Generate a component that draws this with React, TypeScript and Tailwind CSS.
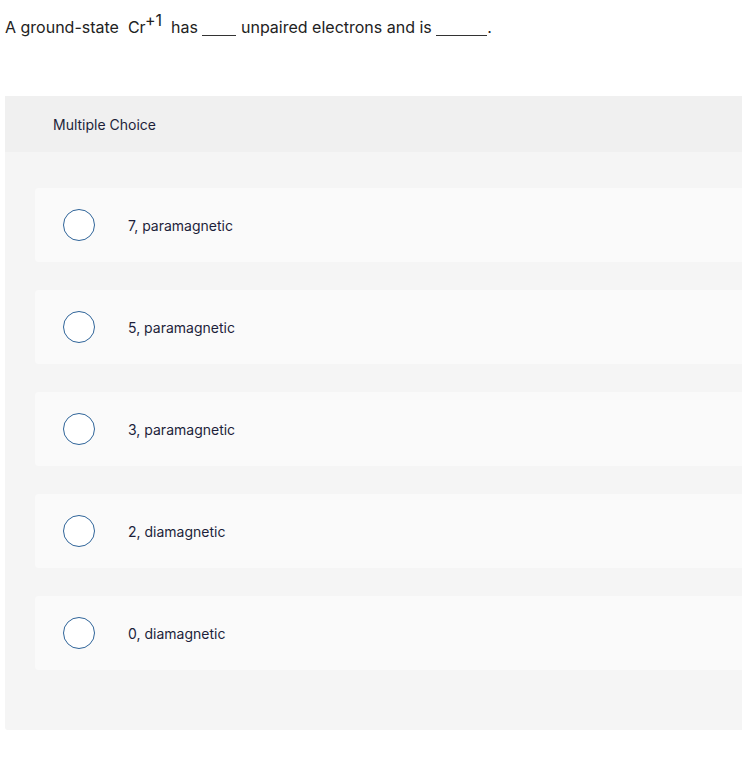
const choices = [
  '7, paramagnetic',
  '5, paramagnetic',
  '3, paramagnetic',
  '2, diamagnetic',
  '0, diamagnetic',
];

function Blank({ w }: { w: string }) {
  return <span className={`inline-block ${w} h-[1px] bg-[#333] align-[-3px]`} />;
}

export default function App() {
  return (
    <div className="w-[742px] h-[760px] overflow-hidden bg-white text-[#1d1f3a] font-['Inter','Liberation_Sans',sans-serif]">
      {/* Question */}
      <div className="pl-[5px] pt-[16px] text-[16px] leading-[22px] text-[#222] whitespace-nowrap">
        A ground-state&nbsp; Cr
        <span className="relative -top-[7px] text-[16px]">+1</span>
        &nbsp; has <Blank w="w-[34px]" /> unpaired electrons and is <Blank w="w-[51px]" />.
      </div>

      {/* Panel */}
      <div className="ml-[5px] mt-[58px] w-[760px] rounded-l-[3px] bg-[#f5f5f5]">
        <div className="h-[56px] flex items-center pl-[48px] bg-[#f0f0f0] text-[14px]">
          Multiple Choice
        </div>
        <div className="pt-[36px] pb-[60px] pl-[30px] flex flex-col gap-[28px]">
          {choices.map((c) => (
            <div
              key={c}
              className="h-[74px] flex items-center rounded-l-[4px] bg-[#fafafa] pl-[28px]"
            >
              <span className="w-[32px] h-[32px] rounded-full border-[1.5px] border-[#2f6499] bg-white shrink-0" />
              <span className="ml-[33px] text-[14px]">{c}</span>
            </div>
          ))}
        </div>
      </div>
    </div>
  );
}
